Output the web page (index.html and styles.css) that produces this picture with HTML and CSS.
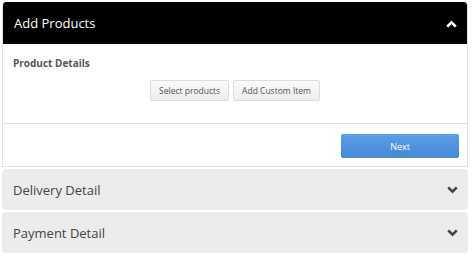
FILE: index.html
```html
<!DOCTYPE html>
<html lang="en">
<head>
  <meta charset="UTF-8" />
  <title>Add Products</title>
  <meta name="viewport" content="width=device-width, initial-scale=1.0"/>
  <link rel="stylesheet" href="styles.css">
</head>
<body>
  <div class="checkout">
    <div class="panel open">
      <div class="panel-head">
        <span class="panel-title">Add Products</span>
        <svg class="chevron" width="11" height="8" viewBox="0 0 11 8"><path d="M1.2 6.6 L5.5 2.3 L9.8 6.6" fill="none" stroke="currentColor" stroke-width="2.6"/></svg>
      </div>
      <div class="panel-body">
        <div class="section-title">Product Details</div>
        <div class="btn-row">
          <button class="btn">Select products</button>
          <button class="btn">Add Custom Item</button>
        </div>
      </div>
      <div class="panel-foot">
        <button class="next-btn">Next</button>
      </div>
    </div>

    <div class="panel closed">
      <div class="panel-head">
        <span class="panel-title">Delivery Detail</span>
        <svg class="chevron" width="11" height="8" viewBox="0 0 11 8"><path d="M1.2 1.4 L5.5 5.7 L9.8 1.4" fill="none" stroke="currentColor" stroke-width="2.6"/></svg>
      </div>
    </div>

    <div class="panel closed">
      <div class="panel-head">
        <span class="panel-title">Payment Detail</span>
        <svg class="chevron" width="11" height="8" viewBox="0 0 11 8"><path d="M1.2 1.4 L5.5 5.7 L9.8 1.4" fill="none" stroke="currentColor" stroke-width="2.6"/></svg>
      </div>
    </div>
  </div>
</body>
</html>
```

FILE: styles.css
```css
:root {
  --head-dark: #000;
  --panel-grey: #ececec;
  --line: #e3e3e3;
  --text: #444;
  --blue: #4a90d9;
}

body {
  margin: 0;
  padding: 2px 6px 0 2px;
  font-family: 'Open Sans', 'Noto Sans', sans-serif;
  background: #fff;
  color: var(--text);
}

.checkout {
  display: flex;
  flex-direction: column;
  gap: 2px;
}

.panel {
  border-radius: 4px;
  overflow: hidden;
}

.panel-head {
  height: 41px;
  display: flex;
  align-items: center;
  justify-content: space-between;
  padding: 0 10px 0 11px;
}

.panel-title {
  font-size: 13px;
}

.open {
  border: 1px solid var(--line);
  border-top: none;
  border-radius: 4px 4px 0 0;
}

.open .panel-head {
  background: var(--head-dark);
  color: #fff;
  height: 42px;
  margin: 0 -1px;
  padding: 0 11px 0 12px;
}

.open .chevron {
  margin-top: 2px;
}

.panel-body {
  padding: 12px 10px 22px;
  border-bottom: 1px solid var(--line);
}

.section-title {
  font-size: 10px;
  font-weight: 700;
  color: #555;
  margin-bottom: 10px;
}

.btn-row {
  display: flex;
  justify-content: center;
  gap: 4px;
}

.btn {
  font-family: inherit;
  font-size: 8.5px;
  color: #555;
  height: 21px;
  padding: 0 8px;
  border: 1px solid #dcdcdc;
  border-radius: 2px;
  background: linear-gradient(#fafafa, #ededed);
}

.panel-foot {
  display: flex;
  justify-content: flex-end;
  padding: 10px 8px 8px;
}

.next-btn {
  font-family: inherit;
  font-size: 9px;
  color: #fff;
  width: 118px;
  height: 24px;
  border: none;
  border-radius: 2px;
  background: linear-gradient(#5aa0e6, #4488d2);
}

.closed {
  background: var(--panel-grey);
}

.closed .chevron {
  color: #444;
}
```
